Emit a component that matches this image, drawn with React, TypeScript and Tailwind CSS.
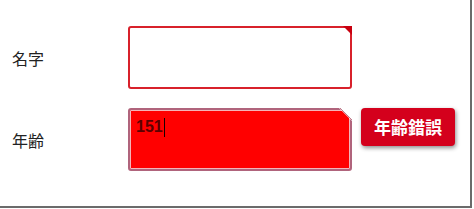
const cjk = '"Noto Sans CJK JP", "Noto Sans CJK TC", sans-serif';

function Corner({ variant }: { variant: "mark" | "notch" }) {
  if (variant === "mark") {
    return (
      <svg className="absolute -top-[2px] -right-[2px]" width="10" height="10" viewBox="0 0 10 10">
        <polygon points="1,0 10,0 10,9" fill="#c8000f" />
      </svg>
    );
  }
  return (
    <svg className="absolute -top-[2px] -right-[2px]" width="13" height="13" viewBox="0 0 13 13">
      <polygon points="0,0 13,0 13,13" fill="#ffffff" />
      <line x1="1" y1="0" x2="13" y2="12" stroke="#c07a8a" strokeWidth="1" />
    </svg>
  );
}

export default function App() {
  return (
    <div className="w-[474px] h-[209px] bg-white overflow-hidden" style={{ fontFamily: cjk }}>
      <div className="w-[472px] h-[208px] border-r-2 border-b-2 border-[#6b6b6b] flex flex-col gap-[19px] pt-[26px]">
        <div className="flex items-center h-[63px]">
          <div className="w-[128px] pl-[12px] text-[16px] text-[#222]">名字</div>
          <div className="relative w-[224px] h-[63px] rounded-[3px] border-2 border-[#d8212b] bg-white">
            <Corner variant="mark" />
          </div>
        </div>
        <div className="flex items-start h-[63px]">
          <div className="w-[128px] pl-[12px] text-[16px] text-[#222] self-center">年齢</div>
          <div className="relative w-[224px] h-[63px] rounded-[3px] border-2 border-[#b0647c] bg-[#ff0000] shadow-[inset_0_0_0_1px_#f4b4b8] px-[6px] pt-[7px]">
            <div className="flex items-center h-[20px]" style={{ fontFamily: '"Liberation Sans", sans-serif' }}>
              <span className="text-[16px] font-bold text-[#5c0000] leading-none">151</span>
              <span className="ml-[1px] w-[1.5px] h-[19px] bg-[#1a0000]" />
            </div>
            <Corner variant="notch" />
          </div>
          <div className="ml-[9px] w-[94px] h-[38px] rounded-[4px] bg-[#d4001c] shadow-[1px_2px_4px_rgba(0,0,0,0.45)] flex items-center justify-center text-white text-[17px] font-bold">
            年齢錯誤
          </div>
        </div>
      </div>
    </div>
  );
}
